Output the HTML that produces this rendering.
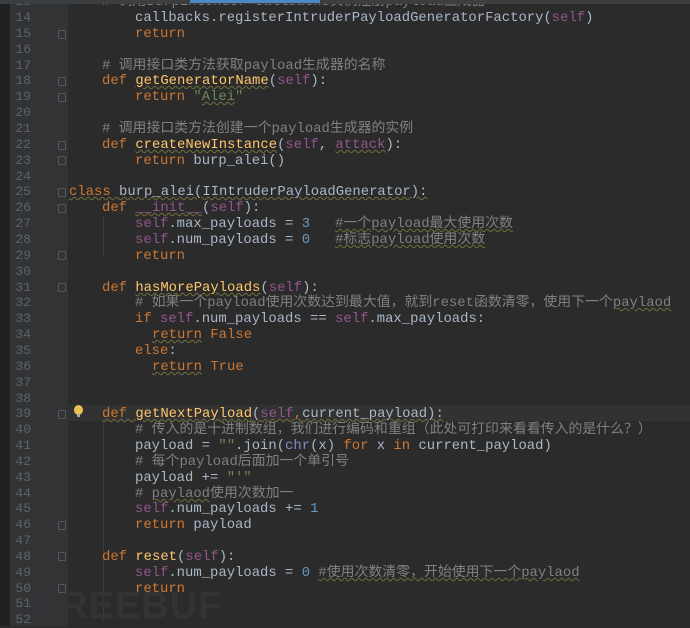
<!DOCTYPE html>
<html><head><meta charset="utf-8"><style>
body{margin:0;width:690px;height:626px;background:#2b2b2b;overflow:hidden;position:relative;font-family:"Liberation Mono","Noto Sans CJK SC",monospace;font-size:13.9px;color:#a9b7c6}
#strip{position:absolute;left:0;top:0;width:10px;height:626px;background:#1f2022}
#gut{position:absolute;left:10px;top:0;width:58px;height:626px;background:#313335}
#top{position:absolute;left:0;top:0;width:690px;height:4px;background:#3c3f41}
#topsel{position:absolute;left:190px;top:0;width:130px;height:3px;background:#4a88c7}
#wrap{position:absolute;left:0;top:1px;width:690px;height:626px}
.n{position:absolute;left:10px;width:21px;text-align:right;color:#606366;font-size:13px;line-height:16px}
.l{position:absolute;white-space:pre;line-height:16px;left:69px}
.k{color:#cc7832}.s{color:#94558d}.f{color:#ffc66d}.g{color:#6a8759}.c{color:#808080}.d{color:#6897bb}.b{color:#8888c6}
.w{text-decoration:underline wavy #6f6f3e;text-decoration-thickness:1px;text-underline-offset:1px}
.fold{position:absolute;left:58px;width:6px;height:7px;border:1px solid #55585b;border-radius:1px}
#hl{position:absolute;left:68px;top:404px;width:622px;height:16px;background:#323232}
.vg{position:absolute;width:1px;background:#3a3a3a}
#wm{position:absolute;left:36px;top:584px;font:bold 38px "Liberation Sans",sans-serif;color:#313335;letter-spacing:1px}
</style></head><body>
<div id="gut"></div><div id="strip"></div>
<div id="wrap">
<div id="hl"></div>
<div class="vg" style="left:103px;top:215px;height:40px"></div>
<div class="vg" style="left:103px;top:420px;height:200px"></div>
<div id="wm">FREEBUF</div>
<div style="position:absolute;left:74px;top:404px;width:9px;height:10px;border-radius:50%;background:#e8c14e"></div>
<div style="position:absolute;left:77px;top:413px;width:3px;height:3px;background:#aaa"></div>
<div class="fold" style="top:29px"></div>
<div class="fold" style="top:76px"></div>
<div class="fold" style="top:92px"></div>
<div class="fold" style="top:140px"></div>
<div class="fold" style="top:155px"></div>
<div class="fold" style="top:187px"></div>
<div class="fold" style="top:203px"></div>
<div class="fold" style="top:250px"></div>
<div class="fold" style="top:282px"></div>
<div class="fold" style="top:409px"></div>
<div class="fold" style="top:520px"></div>
<div class="fold" style="top:551px"></div>
<div class="fold" style="top:583px"></div>

<div class="n" style="top:-7px">13</div><div class="l" style="top:-7px;left:102px"><span class="c"># 调用BurpExtender callbacks实例注册payload生成器</span></div>
<div class="n" style="top:9px">14</div><div class="l" style="top:9px;left:135px">callbacks.registerIntruderPayloadGeneratorFactory(<span class="s">self</span>)</div>
<div class="n" style="top:25px">15</div><div class="l" style="top:25px;left:135px"><span class="k">return</span></div>
<div class="n" style="top:41px">16</div>
<div class="n" style="top:57px">17</div><div class="l" style="top:57px;left:102px"><span class="c"># 调用接口类方法获取payload生成器的名称</span></div>
<div class="n" style="top:72px">18</div><div class="l" style="top:72px;left:102px"><span class="k">def </span><span class="f w">getGeneratorName</span>(<span class="s">self</span>):</div>
<div class="n" style="top:88px">19</div><div class="l" style="top:88px;left:135px"><span class="k">return </span><span class="g">"<span class="w">Alei</span>"</span></div>
<div class="n" style="top:104px">20</div>
<div class="n" style="top:120px">21</div><div class="l" style="top:120px;left:102px"><span class="c"># 调用接口类方法创建一个payload生成器的实例</span></div>
<div class="n" style="top:136px">22</div><div class="l" style="top:136px;left:102px"><span class="k">def </span><span class="f w">createNewInstance</span>(<span class="s">self</span>, <span class="s w">attack</span>):</div>
<div class="n" style="top:152px">23</div><div class="l" style="top:152px;left:135px"><span class="k">return </span>burp_alei()</div>
<div class="n" style="top:168px">24</div>
<div class="n" style="top:183px">25</div><div class="l w" style="top:183px"><span class="k">class </span>burp_alei(IIntruderPayloadGenerator):</div>
<div class="n" style="top:199px">26</div><div class="l" style="top:199px;left:102px"><span class="k">def </span><span class="s w">__init__</span>(<span class="s">self</span>):</div>
<div class="n" style="top:215px">27</div><div class="l" style="top:215px;left:135px"><span class="s">self</span>.max_payloads = <span class="d">3</span>   <span class="c w">#一个payload最大使用次数</span></div>
<div class="n" style="top:231px">28</div><div class="l" style="top:231px;left:135px"><span class="s">self</span>.num_payloads = <span class="d">0</span>   <span class="c w">#标志payload使用次数</span></div>
<div class="n" style="top:247px">29</div><div class="l" style="top:247px;left:135px"><span class="k">return</span></div>
<div class="n" style="top:263px">30</div>
<div class="n" style="top:279px">31</div><div class="l" style="top:279px;left:102px"><span class="k">def </span><span class="f w">hasMorePayloads</span>(<span class="s">self</span>):</div>
<div class="n" style="top:294px">32</div><div class="l" style="top:294px;left:135px"><span class="c"># 如果一个payload使用次数达到最大值，就到reset函数清零，使用下一个<span class="w">paylaod</span></span></div>
<div class="n" style="top:310px">33</div><div class="l" style="top:310px;left:135px"><span class="k">if </span><span class="s">self</span>.num_payloads == <span class="s">self</span>.max_payloads:</div>
<div class="n" style="top:326px">34</div><div class="l" style="top:326px;left:152px"><span class="k"><span class="w">return</span> False</span></div>
<div class="n" style="top:342px">35</div><div class="l" style="top:342px;left:135px"><span class="k">else</span>:</div>
<div class="n" style="top:358px">36</div><div class="l" style="top:358px;left:152px"><span class="k"><span class="w">return</span> True</span></div>
<div class="n" style="top:374px">37</div>
<div class="n" style="top:390px">38</div>
<div class="n" style="top:405px">39</div><div class="l" style="top:405px;left:102px"><span class="w"><span class="k">def </span><span class="f">getNextPayload</span>(<span class="s">self</span><span class="k">,</span>current_payload):</span></div>
<div class="n" style="top:421px">40</div><div class="l" style="top:421px;left:135px"><span class="c"># 传入的是十进制数组，我们进行编码和重组（此处可打印来看看传入的是什么？）</span></div>
<div class="n" style="top:437px">41</div><div class="l" style="top:437px;left:135px">payload = <span class="g">""</span>.join(<span class="b">chr</span>(x) <span class="k">for </span>x <span class="k">in </span>current_payload)</div>
<div class="n" style="top:453px">42</div><div class="l" style="top:453px;left:135px"><span class="c"># 每个payload后面加一个单引号</span></div>
<div class="n" style="top:469px">43</div><div class="l" style="top:469px;left:135px">payload += <span class="g">"'"</span></div>
<div class="n" style="top:485px">44</div><div class="l" style="top:485px;left:135px"><span class="c"># <span class="w">paylaod</span>使用次数加一</span></div>
<div class="n" style="top:500px">45</div><div class="l" style="top:500px;left:135px"><span class="s">self</span>.num_payloads += <span class="d">1</span></div>
<div class="n" style="top:516px">46</div><div class="l" style="top:516px;left:135px"><span class="k">return </span>payload</div>
<div class="n" style="top:532px">47</div>
<div class="n" style="top:548px">48</div><div class="l" style="top:548px;left:102px"><span class="k">def </span><span class="f">reset</span>(<span class="s">self</span>):</div>
<div class="n" style="top:564px">49</div><div class="l" style="top:564px;left:135px"><span class="s">self</span>.num_payloads = <span class="d">0</span> <span class="c w">#使用次数清零，开始使用下一个paylaod</span></div>
<div class="n" style="top:580px">50</div><div class="l" style="top:580px;left:135px"><span class="k">return</span></div>
<div class="n" style="top:595px">51</div>
<div class="n" style="top:611px">52</div>
</div>
<div id="top"></div><div id="topsel"></div>
</body></html>
